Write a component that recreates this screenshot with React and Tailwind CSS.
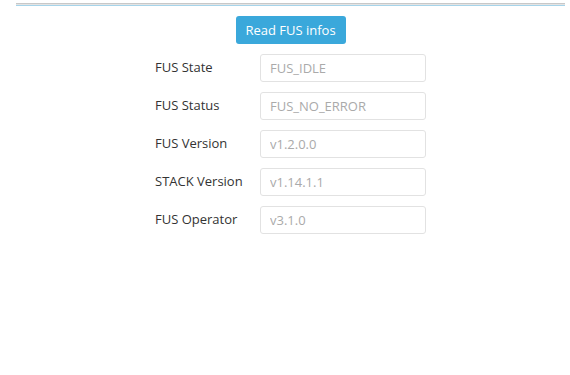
import React from "react";

const rows = [
  { label: "FUS State", value: "FUS_IDLE" },
  { label: "FUS Status", value: "FUS_NO_ERROR" },
  { label: "FUS Version", value: "v1.2.0.0" },
  { label: "STACK Version", value: "v1.14.1.1" },
  { label: "FUS Operator", value: "v3.1.0" },
];

export default function App() {
  return (
    <div
      className="w-[570px] h-[375px] bg-white pt-[3px]"
      style={{ fontFamily: '"Open Sans", "Noto Sans", sans-serif' }}
    >
      <div className="ml-[16px] w-[549px]">
        {/* top rule */}
        <div className="h-px bg-[#c8c8c8]" />
        <div className="h-px bg-[#e4e4e4]" />
        <div className="h-px bg-[#a6d4ea]" />

        <div className="flex justify-center mt-[10px]">
          <button className="h-[28px] w-[110px] rounded-[3px] bg-[#3aa8db] text-white text-[13px] leading-none">
            Read FUS infos
          </button>
        </div>

        <div className="flex flex-col items-center mt-[10px] gap-[10px]">
          {rows.map((r) => (
            <div key={r.label} className="flex items-center">
              <div className="w-[105px] text-[13px] text-[#333] -mt-[1px]">{r.label}</div>
              <input
                readOnly
                value={r.value}
                className="w-[166px] h-[28px] px-[9px] border border-[#e2e2e2] rounded-[3px] text-[13px] text-[#aaa] outline-none"
              />
            </div>
          ))}
        </div>
      </div>
    </div>
  );
}
